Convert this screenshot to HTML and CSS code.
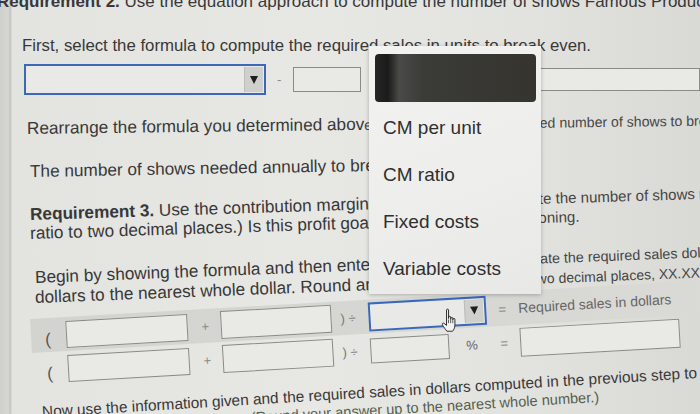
FILE: index.html
```html
<!DOCTYPE html>
<html>
<head>
<meta charset="utf-8">
<link rel="stylesheet" href="styles.css">
</head>
<body>
<div class="screen">
  <div class="content">
    <p class="line top"><b>Requirement 2.</b> Use the equation approach to compute the number of shows Famous Productions must perform each year to break even.</p>
    <p class="line first">First, select the formula to compute the required sales in units to break even.</p>
    <div class="eqrow">
      <div class="select wide"><span class="arrow"></span></div>
      <span class="op">-</span>
      <div class="box b1"></div>
      <span class="op">-</span>
      <div class="box b2"></div>
      <span class="op">=</span>
      <div class="box b3"></div>
    </div>
    <p class="line l1">Rearrange the formula you determined abov<span class="far f1">e to compute the total required number of shows to break even.</span></p>
    <p class="line l2">The number of shows needed annually to break even is</p>
    <p class="line l3"><b>Requirement 3.</b> Use the contribution margin<span class="far f3"> (CM) approach to compute the number of shows needed to earn the target</span></p>
    <p class="line l4">ratio to two decimal places.) Is this profit goa<span class="far f4">l realistic? Give your reasoning.</span></p>
    <p class="line l5">Begin by showing the formula and then ente<span class="far f5">r the two amounts to calculate the required sales dollars needed</span></p>
    <p class="line l6">dollars to the nearest whole dollar. Round an<span class="far f6">y percentage amounts to two decimal places, XX.XX%.)</span></p>
    <div class="table">
      <div class="trow band">
        <span class="paren">(</span>
        <div class="box c2"></div>
        <span class="plus">+</span>
        <div class="box c4"></div>
        <span class="div">) ÷</span>
        <div class="cell6"><div class="select sel6"><span class="arrow"></span></div></div>
        <span class="eq">=</span>
        <span class="label">Required sales in dollars</span>
      </div>
      <div class="trow">
        <span class="paren">(</span>
        <div class="box c2"></div>
        <span class="plus">+</span>
        <div class="box c4"></div>
        <span class="div">) ÷</span>
        <div class="cell6"><div class="box c6"></div><span class="pct">%</span></div>
        <span class="eq">=</span>
        <div class="box c8"></div>
      </div>
    </div>
    <p class="line l7">Now use the information given and the required sales in dollars computed in the previous step to compute the number of shows</p>
    <p class="line l8">compute the number of shows. <span class="hint">(Round your answer up to the nearest whole number.)</span></p>
  </div>

  <div class="menu">
    <div class="item selected"></div>
    <div class="item">CM per unit</div>
    <div class="item">CM ratio</div>
    <div class="item">Fixed costs</div>
    <div class="item">Variable costs</div>
  </div>

  <svg class="hand" width="17" height="25" viewBox="0 0 16 23">
    <path d="M5.2 1.6c0-1.1 1.9-1.1 1.9 0v8l.2-1.3c0-1 1.8-1 1.8 0v2.2l.2-1.2c0-.9 1.8-.9 1.8 0v1.7l.2-.8c0-.9 1.8-.9 1.8 0v5.6c0 2.8-1.2 4.6-2.2 5.8H5.6C4.6 20.2 2.3 17.6 1.3 15.4c-.5-1 .5-2 1.5-1.3l2.4 2z" fill="#f2f2f0" stroke="#2a2a2a" stroke-width="0.9" stroke-linejoin="round"/>
    <path d="M7.1 10.5v3.5M9.1 10.8v3.2M11.1 11.2v2.8" stroke="#2a2a2a" stroke-width="0.7" fill="none"/>
  </svg>
</div>
</body>
</html>
```

FILE: styles.css
```css
html, body {
  margin: 0;
  padding: 0;
}

body {
  width: 700px;
  height: 414px;
  overflow: hidden;
  font-family: "Liberation Sans", Arial, sans-serif;
  color: #383838;
  background: #e4e4e1;
}

.screen {
  position: relative;
  width: 700px;
  height: 414px;
  overflow: hidden;
  background: linear-gradient(90deg, #cfcfcb 0, #d6d6d2 9px, #bdbdb9 10px, #e3e3e0 12px, #e7e7e4 45%, #e2e2df 75%, #d9d9d5 100%);
}

.content {
  padding-left: 27px;
}

.line {
  margin: 0;
  white-space: nowrap;
  font-size: 17.2px;
  line-height: 18px;
  transform-origin: 0 50%;
}

.far {
  color: #454545;
}

.f1 {
  font-size: 14.1px;
}

.f3 {
  font-size: 15px;
}

.f4 {
  font-size: 15.1px;
}

.f5 {
  font-size: 14.3px;
}

.f6 {
  font-size: 14px;
}

.top {
  margin-top: -7px;
  margin-left: -30px;
  font-size: 17px;
}

.first {
  margin-top: 26px;
  margin-left: -5px;
  font-size: 16.8px;
}

.eqrow {
  display: flex;
  align-items: center;
  margin-top: 9px;
  margin-left: -3px;
  height: 31px;
  white-space: nowrap;
}

.select {
  position: relative;
  box-sizing: border-box;
  border: 2px solid #3b68b8;
  background: #e9e9e7;
}

.select .arrow {
  position: absolute;
  top: 1px;
  right: 1px;
  bottom: 1px;
  width: 18px;
  background: #cfcfcb;
  border-left: 1px solid #bcbcb8;
}

.select .arrow::after {
  content: "";
  position: absolute;
  left: 5px;
  top: 50%;
  margin-top: -4px;
  border-left: 4px solid transparent;
  border-right: 4px solid transparent;
  border-top: 8px solid #1e1e1e;
}

.wide {
  width: 248px;
  height: 31px;
}

.box {
  box-sizing: border-box;
  border: 1px solid #8a8a86;
  background: #e9e9e6;
}

.op {
  width: 28px;
  text-align: center;
  font-size: 13px;
  color: #8a8a86;
}

.eqrow .b1 {
  width: 70px;
  height: 25px;
}

.eqrow .b2 {
  width: 120px;
  height: 25px;
}

.eqrow .b3 {
  width: 170px;
  height: 23px;
  margin-left: 2px;
}

.l1 {
  margin-top: 24px;
  transform: rotate(-0.7deg);
}

.l2 {
  margin-top: 24px;
  margin-left: 3px;
  transform: rotate(-1deg);
}

.l3 {
  margin-top: 25px;
  margin-left: 3px;
  transform: rotate(-1.8deg);
}

.l4 {
  margin-left: 3px;
  transform: rotate(-1.8deg);
}

.l5 {
  margin-top: 25px;
  margin-left: 8px;
  transform: rotate(-2.2deg);
}

.l6 {
  margin-top: 1px;
  margin-left: 8px;
  transform: rotate(-2.2deg);
}

.table {
  margin-top: 12px;
  margin-left: 5px;
  transform: rotate(-3.3deg);
  transform-origin: 0 50%;
}

.trow {
  display: grid;
  grid-template-columns: 33px 126px 31px 114px 34px 120px 28px 182px;
  align-items: center;
  height: 34px;
}

.band {
  background: linear-gradient(90deg, #d3d3cf 0, #d7d7d3 70%, #dadad6 100%);
  margin-right: -30px;
}

.paren {
  align-self: end;
  padding-left: 14px;
  padding-bottom: 2px;
  font-size: 17px;
  line-height: 20px;
  color: #555;
}

.plus,
.eq {
  text-align: center;
  font-size: 13px;
  color: #8a8a86;
}

.div {
  padding-left: 6px;
  font-size: 13px;
  color: #777;
}

.c2 {
  width: 122px;
  height: 27px;
  margin-left: 2px;
}

.c4 {
  width: 111px;
  height: 28px;
}

.cell6 {
  display: flex;
  align-items: center;
}

.sel6 {
  width: 118px;
  height: 29px;
}

.c6 {
  width: 79px;
  height: 25px;
}

.pct {
  margin-left: 17px;
  font-size: 13px;
  color: #666;
}

.label {
  margin-left: 2px;
  font-size: 14px;
  color: #666;
  white-space: nowrap;
}

.c8 {
  width: 160px;
  height: 29px;
  margin-left: 2px;
}

.l7 {
  margin-top: 16px;
  margin-left: 15px;
  font-size: 15.4px;
  transform: rotate(-3.4deg);
}

.l8 {
  margin-left: 15px;
  font-size: 15px;
  transform: rotate(-3.4deg);
}

.hint {
  font-size: 14.6px;
  color: #56604e;
}

.menu {
  position: absolute;
  left: 369px;
  top: 46px;
  width: 172px;
  height: 248px;
  box-sizing: border-box;
  padding: 8px 5px 0 6px;
  background: linear-gradient(160deg, #f2f2f0 0, #ededeb 60%, #e8e8e6 100%);
  box-shadow: 0 1px 4px rgba(0, 0, 0, 0.25);
}

.item {
  height: 47px;
  line-height: 47px;
  padding-left: 8px;
  font-size: 19px;
  color: #2f2f2f;
  white-space: nowrap;
}

.item.selected {
  height: 48px;
  margin-bottom: 2px;
  border-radius: 4px;
  background: linear-gradient(90deg, #262626 0, #1b1b1b 8%, #4a4a48 15%, #3b3b37 30%, #35342f 100%);
}

.hand {
  position: absolute;
  left: 441px;
  top: 308px;
}
```
